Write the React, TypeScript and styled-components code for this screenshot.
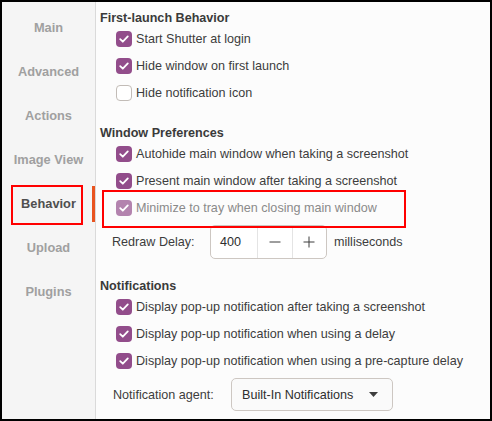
import React from 'react';
import styled, { createGlobalStyle, css } from 'styled-components';

const Global = createGlobalStyle`
  html, body { margin: 0; padding: 0; background: #000; }
  body { font-family: "Liberation Sans", Arial, sans-serif; }
  * { box-sizing: border-box; }
`;

const Frame = styled.div`
  width: 492px;
  height: 421px;
  border: 2px solid #000;
  display: flex;
  background: #fcfcfc;
  overflow: hidden;
`;

const Sidebar = styled.nav`
  width: 94px;
  flex: none;
  background: #f5f5f5;
  border-right: 1px solid #dadada;
  padding-top: 7px;
  display: flex;
  flex-direction: column;
  gap: 8px;
`;

const NavItem = styled.div<{ $active?: boolean; $marked?: boolean }>`
  position: relative;
  height: 36px;
  display: flex;
  align-items: center;
  justify-content: center;
  font-weight: bold;
  font-size: 12.8px;
  color: ${(p) => (p.$active ? '#4f4f4f' : '#a0a0a0')};
  ${(p) =>
    p.$active &&
    css`
      &::before {
        content: '';
        position: absolute;
        right: 0;
        top: 1px;
        width: 3px;
        height: 36px;
        background: #e95420;
      }
    `}
  ${(p) =>
    p.$marked &&
    css`
      &::after {
        content: '';
        position: absolute;
        left: 9px;
        top: 0;
        width: 68px;
        height: 36px;
        border: 2px solid #ff0000;
      }
    `}
`;

const Content = styled.main`
  flex: 1;
  padding: 9px 0 0 4px;
  display: flex;
  flex-direction: column;
  color: #3d3d3d;
  font-size: 12.6px;
`;

const Section = styled.section`
  display: flex;
  flex-direction: column;
  & + & {
    margin-top: 20px;
  }
`;

const Heading = styled.div`
  font-weight: bold;
  height: 14px;
  line-height: 14px;
  color: #3a3a3a;
`;

const CheckRow = styled.label<{ $disabled?: boolean; $marked?: boolean }>`
  position: relative;
  height: 27px;
  display: flex;
  align-items: center;
  gap: 4px;
  margin-left: 16px;
  color: ${(p) => (p.$disabled ? '#8a8a8a' : '#3d3d3d')};
  ${(p) =>
    p.$marked &&
    css`
      &::after {
        content: '';
        position: absolute;
        left: -14px;
        top: -4px;
        width: 300px;
        height: 34px;
        border: 2px solid #ff0000;
      }
    `}
`;

const Box = styled.span<{ $checked?: boolean; $disabled?: boolean }>`
  width: 16px;
  height: 16px;
  flex: none;
  border-radius: 4px;
  display: flex;
  align-items: center;
  justify-content: center;
  ${(p) =>
    p.$checked
      ? css`
          background: ${p.$disabled ? '#b383ae' : '#924d8b'};
        `
      : css`
          background: #ffffff;
          border: 1px solid #c2bcb7;
        `}
`;

const FieldRow = styled.div<{ $labelWidth: number; $indent: number }>`
  margin-top: 4px;
  margin-left: ${(p) => p.$indent}px;
  display: flex;
  align-items: center;
  color: #3d3d3d;
`;

const FieldLabel = styled.span<{ $width: number }>`
  width: ${(p) => p.$width}px;
  flex: none;
`;

const Spin = styled.div`
  display: flex;
  height: 34px;
  width: 117px;
  border: 1px solid #cdc7c2;
  border-radius: 5px;
  background: #ffffff;
  overflow: hidden;
`;

const SpinEntry = styled.div`
  width: 47px;
  padding-left: 9px;
  display: flex;
  align-items: center;
  color: #2e2e2e;
`;

const SpinButton = styled.div`
  width: 35px;
  border-left: 1px solid #e4e4e4;
  display: flex;
  align-items: center;
  justify-content: center;
  color: #3d3d3d;
`;

const Unit = styled.span`
  margin-left: 7px;
`;

const Combo = styled.div`
  height: 33px;
  width: 162px;
  border: 1px solid #cdc7c2;
  border-radius: 5px;
  background: #fafafa;
  display: flex;
  align-items: center;
  justify-content: space-between;
  padding: 0 14px 0 10px;
  color: #2e2e2e;
`;

const Check = () => (
  <svg width="12" height="12" viewBox="0 0 12 12">
    <polyline points="2.2,6.2 4.8,8.7 9.8,3.4" fill="none" stroke="#fff" strokeWidth="1.8" strokeLinecap="round" strokeLinejoin="round" />
  </svg>
);

const CheckItem = ({
  label,
  checked = true,
  disabled = false,
  marked = false,
}: {
  label: string;
  checked?: boolean;
  disabled?: boolean;
  marked?: boolean;
}) => (
  <CheckRow $disabled={disabled} $marked={marked}>
    <Box $checked={checked} $disabled={disabled}>
      {checked && <Check />}
    </Box>
    <span>{label}</span>
  </CheckRow>
);

const nav = ['Main', 'Advanced', 'Actions', 'Image View', 'Behavior', 'Upload', 'Plugins'];

export default function App() {
  return (
    <>
      <Global />
      <Frame>
        <Sidebar>
          {nav.map((n) => (
            <NavItem key={n} $active={n === 'Behavior'} $marked={n === 'Behavior'}>
              {n}
            </NavItem>
          ))}
        </Sidebar>
        <Content>
          <Section>
            <Heading>First-launch Behavior</Heading>
            <CheckItem label="Start Shutter at login" />
            <CheckItem label="Hide window on first launch" />
            <CheckItem label="Hide notification icon" checked={false} />
          </Section>
          <Section>
            <Heading>Window Preferences</Heading>
            <CheckItem label="Autohide main window when taking a screenshot" />
            <CheckItem label="Present main window after taking a screenshot" />
            <CheckItem label="Minimize to tray when closing main window" disabled marked />
            <FieldRow $labelWidth={98} $indent={12}>
              <FieldLabel $width={98}>Redraw Delay:</FieldLabel>
              <Spin>
                <SpinEntry>400</SpinEntry>
                <SpinButton>
                  <svg width="12" height="12" viewBox="0 0 12 12">
                    <line x1="0.5" y1="6" x2="11.5" y2="6" stroke="#3d3d3d" strokeWidth="1" />
                  </svg>
                </SpinButton>
                <SpinButton>
                  <svg width="12" height="12" viewBox="0 0 12 12">
                    <line x1="0.5" y1="6" x2="11.5" y2="6" stroke="#3d3d3d" strokeWidth="1" />
                    <line x1="6" y1="0.5" x2="6" y2="11.5" stroke="#3d3d3d" strokeWidth="1" />
                  </svg>
                </SpinButton>
              </Spin>
              <Unit>milliseconds</Unit>
            </FieldRow>
          </Section>
          <Section>
            <Heading>Notifications</Heading>
            <CheckItem label="Display pop-up notification after taking a screenshot" />
            <CheckItem label="Display pop-up notification when using a delay" />
            <CheckItem label="Display pop-up notification when using a pre-capture delay" />
            <FieldRow $labelWidth={118} $indent={13}>
              <FieldLabel $width={118}>Notification agent:</FieldLabel>
              <Combo>
                <span>Built-In Notifications</span>
                <svg width="9" height="5" viewBox="0 0 9 5">
                  <polygon points="0,0 9,0 4.5,5" fill="#3d3d3d" />
                </svg>
              </Combo>
            </FieldRow>
          </Section>
        </Content>
      </Frame>
    </>
  );
}
